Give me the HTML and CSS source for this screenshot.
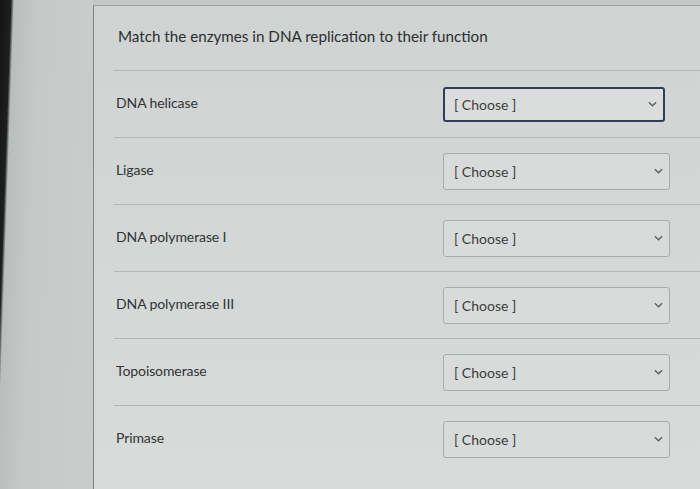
FILE: index.html
```html
<!DOCTYPE html>
<html>
<head>
<meta charset="utf-8">
<link rel="stylesheet" href="styles.css">
</head>
<body>
<div class="screen">
  <div class="margin"></div>
  <div class="card">
    <div class="question">Match the enzymes in DNA replication to their function</div>
    <div class="row">
      <div class="label">DNA helicase</div>
      <div class="select focused"><span>[ Choose ]</span><svg class="chev" viewBox="0 0 10 6"><path d="M1 1 L5 5 L9 1"/></svg></div>
    </div>
    <div class="row">
      <div class="label">Ligase</div>
      <div class="select"><span>[ Choose ]</span><svg class="chev" viewBox="0 0 10 6"><path d="M1 1 L5 5 L9 1"/></svg></div>
    </div>
    <div class="row">
      <div class="label">DNA polymerase I</div>
      <div class="select"><span>[ Choose ]</span><svg class="chev" viewBox="0 0 10 6"><path d="M1 1 L5 5 L9 1"/></svg></div>
    </div>
    <div class="row">
      <div class="label">DNA polymerase III</div>
      <div class="select"><span>[ Choose ]</span><svg class="chev" viewBox="0 0 10 6"><path d="M1 1 L5 5 L9 1"/></svg></div>
    </div>
    <div class="row">
      <div class="label">Topoisomerase</div>
      <div class="select"><span>[ Choose ]</span><svg class="chev" viewBox="0 0 10 6"><path d="M1 1 L5 5 L9 1"/></svg></div>
    </div>
    <div class="row">
      <div class="label">Primase</div>
      <div class="select"><span>[ Choose ]</span><svg class="chev" viewBox="0 0 10 6"><path d="M1 1 L5 5 L9 1"/></svg></div>
    </div>
  </div>
</div>
</body>
</html>
```
FILE: styles.css
```css
html, body {
  margin: 0;
  padding: 0;
  height: 489px;
  overflow: hidden;
}
body {
  font-family: Lato, "Open Sans", sans-serif;
  color: #3a3d3e;
  background: #c4c9c7;
}
.screen {
  display: flex;
  height: 489px;
}
.margin {
  width: 93px;
  flex: none;
  background: linear-gradient(92deg, #141414 0, #1e1f1f 11px, #b9bebc 14px, #c5cac8 40px, #c8cdcb 93px);
}
.card {
  flex: 1;
  margin-top: 5px;
  border-left: 1px solid #7e8483;
  border-top: 1px solid #9da2a0;
  background: linear-gradient(180deg, #cfd3d1 0%, #d3d7d5 50%, #d8dbd9 100%);
  padding-left: 20px;
  display: flex;
  flex-direction: column;
}
.question {
  font-size: 15.2px;
  color: #2c2f31;
  padding: 21px 0 0 4px;
  height: 43px;
  border-bottom: 1px solid #b3b8b6;
}
.row {
  height: 66px;
  display: flex;
  align-items: center;
  border-bottom: 1px solid #b3b8b6;
}
.row:last-child {
  border-bottom: none;
}
.label {
  width: 327px;
  padding-left: 2px;
  margin-top: -4px;
  font-size: 14px;
  color: #303436;
  letter-spacing: -0.1px;
}
.select {
  width: 227px;
  height: 37px;
  box-sizing: border-box;
  border: 1px solid #a8adab;
  border-radius: 3px;
  background: #d8dbd9;
  display: flex;
  align-items: center;
  justify-content: space-between;
  padding: 0 6px 0 10px;
  font-size: 14px;
  color: #3a3e40;
}
.select.focused {
  border: 2px solid #2e3d5a;
  background: #dadddb;
  height: 35px;
  width: 222px;
  padding-left: 9px;
}
.chev {
  width: 9px;
  height: 6px;
  fill: none;
  stroke: #5a5f61;
  stroke-width: 1.5;
}
```
